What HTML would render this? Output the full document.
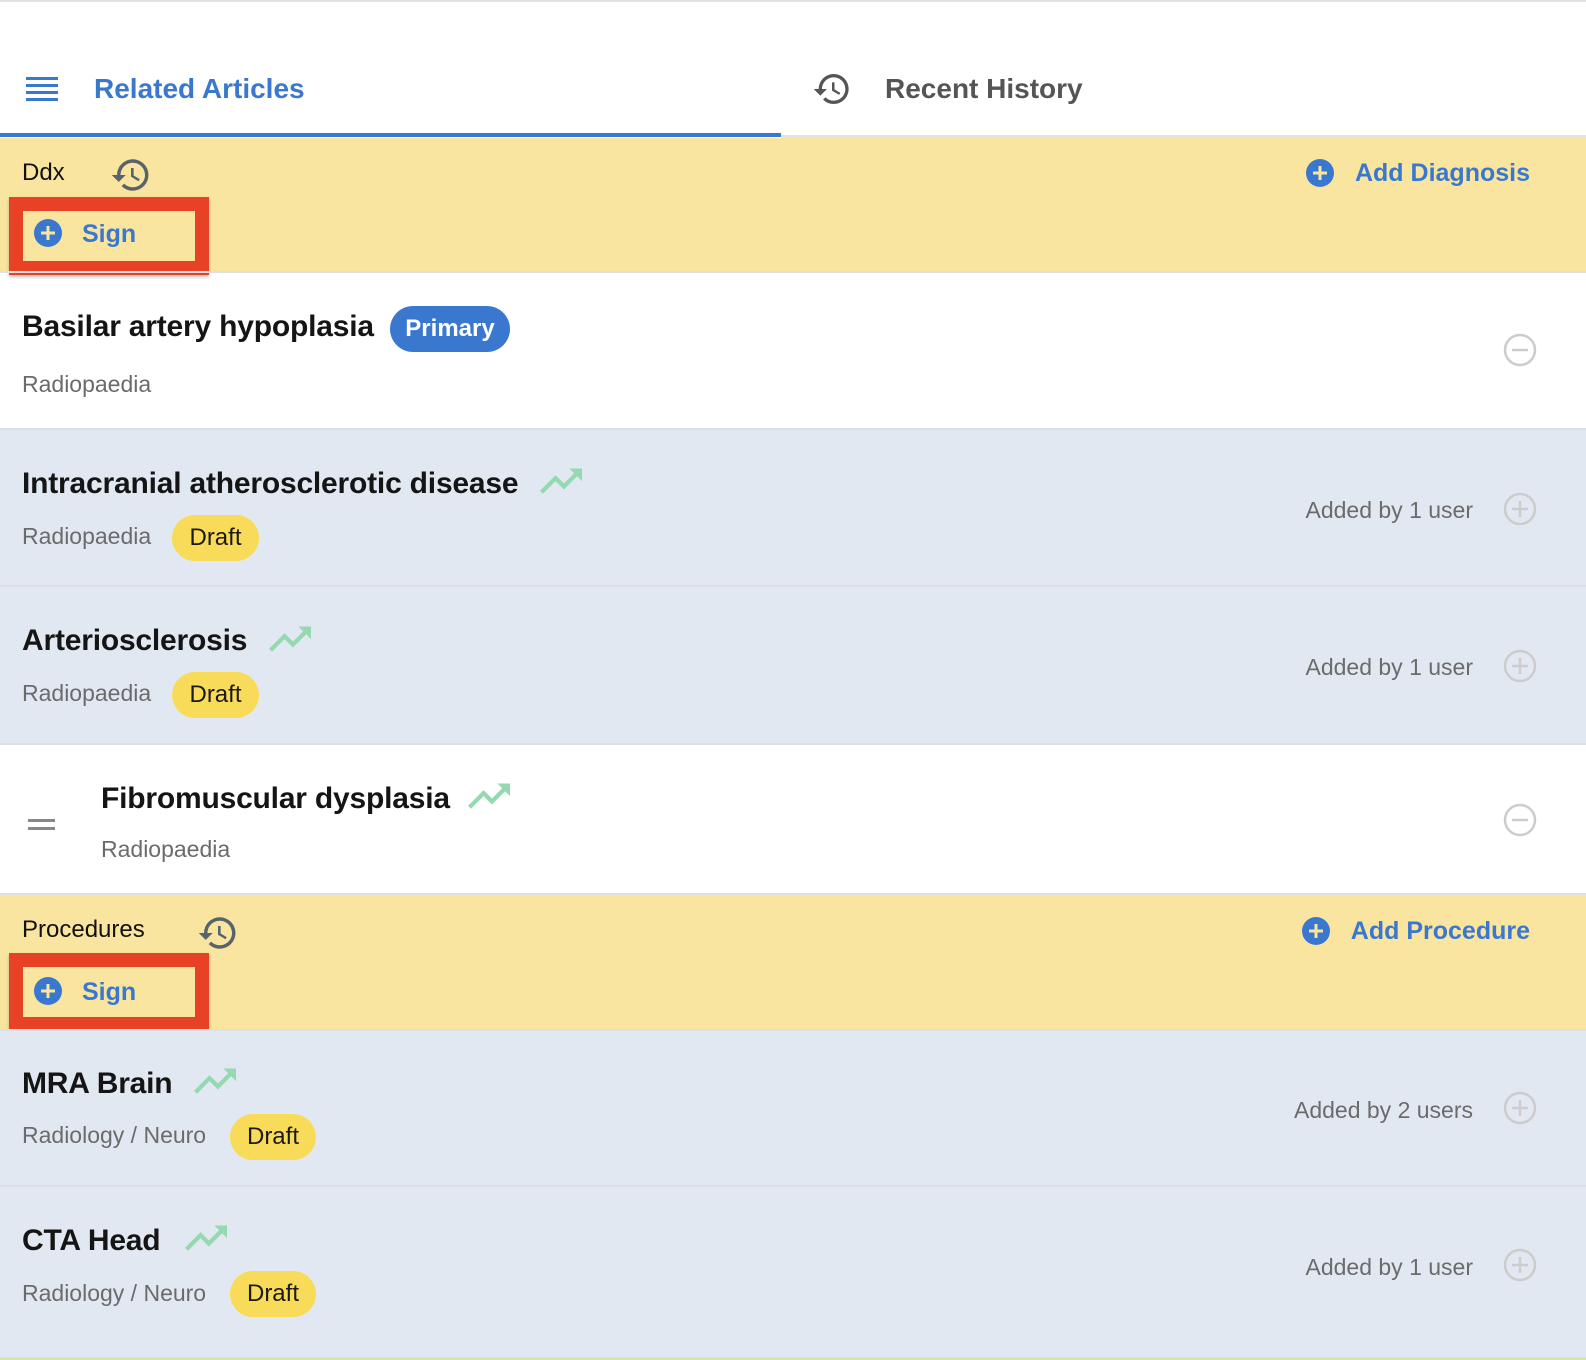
<!DOCTYPE html>
<html><head><meta charset="utf-8"><style>
*{margin:0;padding:0;box-sizing:border-box}
body{width:1586px;height:1360px;position:relative;overflow:hidden;background:#fff;font-family:"Liberation Sans",Arial,sans-serif}
.a{position:absolute}
.blue{color:#3a78d0}
.t{position:absolute;font-size:30px;font-weight:bold;color:#151515;line-height:36px;white-space:nowrap;letter-spacing:-0.2px}
.s{position:absolute;font-size:23px;color:#6b6b6b;line-height:28px;white-space:nowrap}
.draft{position:absolute;height:46px;border-radius:23px;background:#f8db58;color:#1a1a1a;font-size:24px;line-height:46px;text-align:center}
.added{position:absolute;right:113px;font-size:23px;color:#6b6b6b;line-height:28px;white-space:nowrap}
.sec{position:absolute;left:0;width:1586px;background:#f9e59f}
.row{position:absolute;left:0;width:1586px;border-bottom:2px solid #dcdfe4}
.gray{background:#e2e8f2}
</style></head><body>
<div class="a" style="left:0;top:0;width:1586px;height:2px;background:#e2e2e2"></div>

<svg class="a" style="left:26px;top:76px" width="32" height="26" viewBox="0 0 32 26"><g fill="#3a78d0"><rect y="1" width="32" height="3"/><rect y="8" width="32" height="3"/><rect y="15" width="32" height="3"/><rect y="22" width="32" height="3"/></g></svg>
<div class="a blue" style="left:94px;top:71px;font-size:28px;font-weight:bold;line-height:36px">Related Articles</div>
<svg class="a" style="left:812px;top:69px" width="40" height="40" viewBox="0 0 24 24"><path fill="#555" d="M13 3a9 9 0 0 0-9 9H1l3.89 3.89.07.14L9 12H6c0-3.87 3.13-7 7-7s7 3.13 7 7-3.13 7-7 7c-1.930 0-3.68-.79-4.94-2.06l-1.42 1.42A8.954 8.954 0 0 0 13 21a9 9 0 0 0 0-18zm-1 5v5l4.28 2.54.72-1.21-3.5-2.08V8H12z"/></svg>
<div class="a" style="left:885px;top:71px;font-size:28px;font-weight:bold;line-height:36px;color:#555">Recent History</div>
<div class="a" style="left:0;top:133px;width:781px;height:4px;background:#3a78d0"></div>
<div class="a" style="left:781px;top:135px;width:805px;height:3px;background:#e4e4e4"></div>

<div class="sec" style="top:138px;height:133px"></div>
<div class="a" style="left:22px;top:159px;font-size:24px;line-height:28px;color:#111">Ddx</div>
<svg class="a" style="left:110px;top:154px" width="42" height="42" viewBox="0 0 24 24"><path fill="#59636b" d="M13 3a9 9 0 0 0-9 9H1l3.89 3.89.07.14L9 12H6c0-3.87 3.13-7 7-7s7 3.13 7 7-3.13 7-7 7c-1.93 0-3.68-.79-4.94-2.06l-1.42 1.42A8.954 8.954 0 0 0 13 21a9 9 0 0 0 0-18zm-1 5v5l4.28 2.54.72-1.210-3.5-2.08V8H12z"/></svg>
<div class="a" style="left:9px;top:197px;width:200px;height:78px;border:14px solid #e84226;box-shadow:0 2px 3px rgba(0,0,0,.25)"></div>
<svg class="a" style="left:33px;top:218px" width="30" height="30" viewBox="0 0 30 30"><circle cx="15" cy="15" r="14" fill="#3a78d0"/><path d="M15 8v14M8 15h14" stroke="#f9e59f" stroke-width="3"/></svg>
<div class="a blue" style="left:82px;top:219px;font-size:25px;line-height:30px;font-weight:bold">Sign</div>
<svg class="a" style="left:1305px;top:158px" width="30" height="30" viewBox="0 0 30 30"><circle cx="15" cy="15" r="14" fill="#3a78d0"/><path d="M15 8v14M8 15h14" stroke="#f9e59f" stroke-width="3"/></svg>
<div class="a blue" style="right:56px;top:158px;font-size:25px;line-height:30px;font-weight:bold">Add Diagnosis</div>

<div class="row" style="top:271px;height:159px;border-top:2px solid #dcdfe4"></div>
<div class="t" style="left:22px;top:309px">Basilar artery hypoplasia</div>
<div class="a" style="left:390px;top:306px;width:120px;height:46px;border-radius:23px;background:#3a78d0;color:#fff;font-weight:bold;font-size:24px;line-height:46px;text-align:center">Primary</div>
<div class="s" style="left:22px;top:370px">Radiopaedia</div>
<svg class="a" style="left:1503px;top:333px" width="34" height="34" viewBox="0 0 34 34"><circle cx="17" cy="17" r="15" fill="none" stroke="#ccc" stroke-width="2.5"/><path d="M9 17h16" stroke="#ccc" stroke-width="2.5"/></svg>

<div class="row gray" style="top:430px;height:157px"></div>
<div class="t" style="left:22px;top:466px">Intracranial atherosclerotic disease</div>
<svg class="a" style="left:540px;top:464px" width="42" height="30" viewBox="2 4 20 14"><path fill="#94d9b0" d="M16 6l2.29 2.29-4.88 4.88-4-4L2 16.59 3.41 18l6-6 4 4 6.3-6.29L22 12V6z"/></svg>
<div class="s" style="left:22px;top:522px">Radiopaedia</div>
<div class="draft" style="left:172px;top:515px;width:87px">Draft</div>
<div class="added" style="top:496px">Added by 1 user</div>
<svg class="a" style="left:1503px;top:492px" width="34" height="34" viewBox="0 0 34 34"><circle cx="17" cy="17" r="15" fill="none" stroke="#ccc" stroke-width="2.5"/><path d="M9 17h16M17 9v16" stroke="#ccc" stroke-width="2.5"/></svg>

<div class="row gray" style="top:587px;height:158px"></div>
<div class="t" style="left:22px;top:623px">Arteriosclerosis</div>
<svg class="a" style="left:269px;top:622px" width="42" height="30" viewBox="2 4 20 14"><path fill="#94d9b0" d="M16 6l2.29 2.29-4.88 4.88-4-4L2 16.59 3.41 18l6-6 4 4 6.3-6.29L22 12V6z"/></svg>
<div class="s" style="left:22px;top:679px">Radiopaedia</div>
<div class="draft" style="left:172px;top:672px;width:87px">Draft</div>
<div class="added" style="top:653px">Added by 1 user</div>
<svg class="a" style="left:1503px;top:649px" width="34" height="34" viewBox="0 0 34 34"><circle cx="17" cy="17" r="15" fill="none" stroke="#ccc" stroke-width="2.5"/><path d="M9 17h16M17 9v16" stroke="#ccc" stroke-width="2.5"/></svg>

<div class="row" style="top:745px;height:150px"></div>
<div class="a" style="left:28px;top:819px;width:27px;height:3px;background:#888"></div>
<div class="a" style="left:28px;top:827px;width:27px;height:3px;background:#888"></div>
<div class="t" style="left:101px;top:781px">Fibromuscular dysplasia</div>
<svg class="a" style="left:468px;top:779px" width="42" height="30" viewBox="2 4 20 14"><path fill="#94d9b0" d="M16 6l2.29 2.29-4.88 4.88-4-4L2 16.59 3.41 18l6-6 4 4 6.3-6.29L22 12V6z"/></svg>
<div class="s" style="left:101px;top:835px">Radiopaedia</div>
<svg class="a" style="left:1503px;top:803px" width="34" height="34" viewBox="0 0 34 34"><circle cx="17" cy="17" r="15" fill="none" stroke="#ccc" stroke-width="2.5"/><path d="M9 17h16" stroke="#ccc" stroke-width="2.5"/></svg>

<div class="sec" style="top:895px;height:134px"></div>
<div class="a" style="left:22px;top:916px;font-size:24px;line-height:28px;color:#111">Procedures</div>
<svg class="a" style="left:197px;top:912px" width="42" height="42" viewBox="0 0 24 24"><path fill="#59636b" d="M13 3a9 9 0 0 0-9 9H1l3.89 3.89.07.14L9 12H6c0-3.87 3.13-7 7-7s7 3.13 7 7-3.13 7-7 7c-1.93 0-3.68-.79-4.94-2.06l-1.42 1.42A8.954 8.954 0 0 0 13 21a9 9 0 0 0 0-18zm-1 5v5l4.28 2.54.72-1.21-3.5-2.08V8H12z"/></svg>
<div class="a" style="left:9px;top:953px;width:200px;height:78px;border:14px solid #e84226;box-shadow:0 2px 3px rgba(0,0,0,.25)"></div>
<svg class="a" style="left:33px;top:976px" width="30" height="30" viewBox="0 0 30 30"><circle cx="15" cy="15" r="14" fill="#3a78d0"/><path d="M15 8v14M8 15h14" stroke="#f9e59f" stroke-width="3"/></svg>
<div class="a blue" style="left:82px;top:977px;font-size:25px;line-height:30px;font-weight:bold">Sign</div>
<svg class="a" style="left:1301px;top:916px" width="30" height="30" viewBox="0 0 30 30"><circle cx="15" cy="15" r="14" fill="#3a78d0"/><path d="M15 8v14M8 15h14" stroke="#f9e59f" stroke-width="3"/></svg>
<div class="a blue" style="right:56px;top:916px;font-size:25px;line-height:30px;font-weight:bold">Add Procedure</div>

<div class="row gray" style="top:1029px;height:158px;border-top:2px solid #dcdfe4"></div>
<div class="t" style="left:22px;top:1066px">MRA Brain</div>
<svg class="a" style="left:194px;top:1064px" width="42" height="30" viewBox="2 4 20 14"><path fill="#94d9b0" d="M16 6l2.29 2.29-4.88 4.88-4-4L2 16.59 3.41 18l6-6 4 4 6.3-6.29L22 12V6z"/></svg>
<div class="s" style="left:22px;top:1121px">Radiology / Neuro</div>
<div class="draft" style="left:230px;top:1114px;width:86px">Draft</div>
<div class="added" style="top:1096px">Added by 2 users</div>
<svg class="a" style="left:1503px;top:1091px" width="34" height="34" viewBox="0 0 34 34"><circle cx="17" cy="17" r="15" fill="none" stroke="#ccc" stroke-width="2.5"/><path d="M9 17h16M17 9v16" stroke="#ccc" stroke-width="2.5"/></svg>

<div class="row gray" style="top:1187px;height:171px;border-bottom:1px solid #dcdfe4"></div>
<div class="a" style="left:0;top:1358px;width:1586px;height:2px;background:#cfe6a8"></div>
<div class="t" style="left:22px;top:1223px">CTA Head</div>
<svg class="a" style="left:185px;top:1221px" width="42" height="30" viewBox="2 4 20 14"><path fill="#94d9b0" d="M16 6l2.29 2.29-4.88 4.88-4-4L2 16.59 3.41 18l6-6 4 4 6.3-6.29L22 12V6z"/></svg>
<div class="s" style="left:22px;top:1279px">Radiology / Neuro</div>
<div class="draft" style="left:230px;top:1271px;width:86px">Draft</div>
<div class="added" style="top:1253px">Added by 1 user</div>
<svg class="a" style="left:1503px;top:1248px" width="34" height="34" viewBox="0 0 34 34"><circle cx="17" cy="17" r="15" fill="none" stroke="#ccc" stroke-width="2.5"/><path d="M9 17h16M17 9v16" stroke="#ccc" stroke-width="2.5"/></svg>
</body></html>
